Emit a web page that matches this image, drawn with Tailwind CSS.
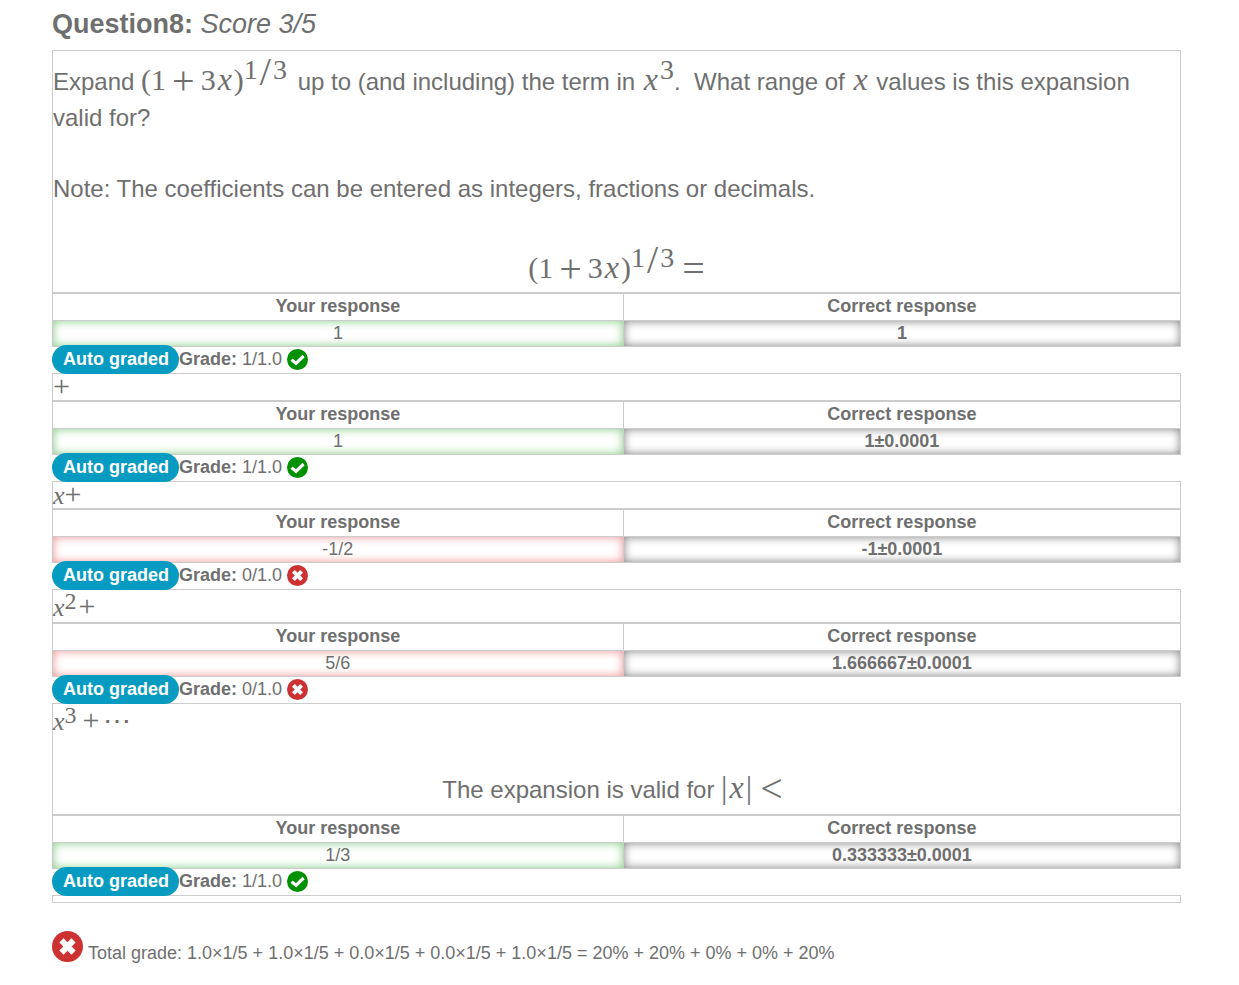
<!DOCTYPE html>
<html lang="en">
<head>
  <meta charset="UTF-8">
  <meta name="viewport" content="width=device-width, initial-scale=1.0">
  <title>Question 8</title>
  <script src="https://cdn.jsdelivr.net/npm/@tailwindcss/browser@4"></script>
</head>
<body class="bg-white font-['Liberation_Sans',Arial,sans-serif] text-lg text-[#6f6f6f]">
  <!-- Shared icons -->
  <svg class="hidden">
    <symbol id="icon-ok" viewBox="0 0 21 21">
      <circle cx="10.5" cy="10.5" r="10.5" fill="#009100"/>
      <path d="M4.6 10.6 L9 14.4 L16.6 7" fill="none" stroke="#fff" stroke-width="3.2"/>
    </symbol>
    <symbol id="icon-bad" viewBox="0 0 21 21">
      <circle cx="10.5" cy="10.5" r="10.5" fill="#cc3232"/>
      <path d="M6.4 6.4 L14.6 14.6 M14.6 6.4 L6.4 14.6" fill="none" stroke="#fff" stroke-width="4"/>
    </symbol>
  </svg>

  <main class="pl-[52px] pr-[58px] pt-2">
    <h1 class="text-[27px] leading-8 font-bold">Question8: <em class="font-normal">Score 3/5</em></h1>

    <!-- Question text -->
    <section class="mt-[10px] border border-[#ccc] pt-[13px] pb-1 text-2xl leading-9">
      <p>Expand <span class="mr-1 font-['Liberation_Serif',serif] text-[30px] leading-0 whitespace-nowrap">(1<span class="mx-[6px] align-[-4px] text-[40px] leading-0">+</span>3<i class="mx-0.5 text-[32px] leading-0">x</i>)<span class="align-[11px] text-[28px]">1<span class="mx-0.5 align-[-6px] text-[40px] leading-0">/</span>3</span></span> up to (and including) the term in <span class="font-['Liberation_Serif',serif] text-[28px] leading-0"><i class="mx-0.5 text-[32px] leading-0">x</i><span class="align-[11px]">3</span></span>. &nbsp;What range of <i class="mx-0.5 font-['Liberation_Serif',serif] text-[32px] leading-0">x</i> values is this expansion valid for?</p>
      <p class="mt-[35px]">Note: The coefficients can be entered as integers, fractions or decimals.</p>
      <p class="mt-[45px] text-center"><span class="font-['Liberation_Serif',serif] text-[30px] leading-0 whitespace-nowrap">(1<span class="mx-[6px] align-[-4px] text-[40px] leading-0">+</span>3<i class="mx-0.5 text-[32px] leading-0">x</i>)<span class="align-[11px] text-[28px]">1<span class="mx-0.5 align-[-6px] text-[40px] leading-0">/</span>3</span><span class="ml-2 align-[-4px] text-[40px] leading-0">=</span></span></p>
    </section>
    <table class="w-full table-fixed border-collapse text-center">
      <colgroup><col class="w-[50.6%]"><col></colgroup>
      <tr class="leading-6"><th class="border border-[#ccc] p-0 pb-0.5">Your response</th><th class="border border-[#ccc] p-0 pb-0.5">Correct response</th></tr>
      <tr class="leading-6"><td class="border border-[#ccc] p-0 pb-px shadow-[inset_0_0_10px_#80cc80]">1</td><td class="border border-[#ccc] p-0 pb-px font-bold shadow-[inset_0_0_10px_#808080]">1</td></tr>
    </table>
    <div class="mb-0.5 flex h-6 items-center">
      <span class="rounded-full bg-[#089bc1] pr-[10px] pl-[11px] leading-[29px] font-bold text-white">Auto graded</span>
      <b>Grade:</b><span class="ml-[5px]">1/1.0</span>
      <svg class="ml-[5px] size-[21px]" role="img" aria-label="Correct"><use href="#icon-ok"/></svg>
    </div>

    <!-- x term -->
    <section class="h-7 border border-[#ccc] font-['Liberation_Serif',serif] text-[30px] leading-6">+</section>
    <table class="w-full table-fixed border-collapse text-center">
      <colgroup><col class="w-[50.6%]"><col></colgroup>
      <tr class="leading-6"><th class="border border-[#ccc] p-0 pb-0.5">Your response</th><th class="border border-[#ccc] p-0 pb-0.5">Correct response</th></tr>
      <tr class="leading-6"><td class="border border-[#ccc] p-0 pb-px shadow-[inset_0_0_10px_#80cc80]">1</td><td class="border border-[#ccc] p-0 pb-px font-bold shadow-[inset_0_0_10px_#808080]">1±0.0001</td></tr>
    </table>
    <div class="mb-0.5 flex h-6 items-center">
      <span class="rounded-full bg-[#089bc1] pr-[10px] pl-[11px] leading-[29px] font-bold text-white">Auto graded</span>
      <b>Grade:</b><span class="ml-[5px]">1/1.0</span>
      <svg class="ml-[5px] size-[21px]" role="img" aria-label="Correct"><use href="#icon-ok"/></svg>
    </div>

    <!-- x squared term -->
    <section class="h-7 border border-[#ccc] font-['Liberation_Serif',serif] text-[30px] leading-6"><i class="text-[26px] leading-0">x</i>+</section>
    <table class="w-full table-fixed border-collapse text-center">
      <colgroup><col class="w-[50.6%]"><col></colgroup>
      <tr class="leading-6"><th class="border border-[#ccc] p-0 pb-0.5">Your response</th><th class="border border-[#ccc] p-0 pb-0.5">Correct response</th></tr>
      <tr class="leading-6"><td class="border border-[#ccc] p-0 pb-px shadow-[inset_0_0_10px_#f09090]">-1/2</td><td class="border border-[#ccc] p-0 pb-px font-bold shadow-[inset_0_0_10px_#808080]">-1±0.0001</td></tr>
    </table>
    <div class="mb-0.5 flex h-6 items-center">
      <span class="rounded-full bg-[#089bc1] pr-[10px] pl-[11px] leading-[29px] font-bold text-white">Auto graded</span>
      <b>Grade:</b><span class="ml-[5px]">0/1.0</span>
      <svg class="ml-[5px] size-[21px]" role="img" aria-label="Incorrect"><use href="#icon-bad"/></svg>
    </div>

    <!-- x cubed term -->
    <section class="h-[34px] border border-[#ccc] pt-1 font-['Liberation_Serif',serif] text-[30px] leading-6"><i class="text-[26px] leading-0">x</i><span class="align-[7px] text-2xl leading-0">2</span><span class="ml-0.5">+</span></section>
    <table class="w-full table-fixed border-collapse text-center">
      <colgroup><col class="w-[50.6%]"><col></colgroup>
      <tr class="leading-6"><th class="border border-[#ccc] p-0 pb-0.5">Your response</th><th class="border border-[#ccc] p-0 pb-0.5">Correct response</th></tr>
      <tr class="leading-6"><td class="border border-[#ccc] p-0 pb-px shadow-[inset_0_0_10px_#f09090]">5/6</td><td class="border border-[#ccc] p-0 pb-px font-bold shadow-[inset_0_0_10px_#808080]">1.666667±0.0001</td></tr>
    </table>
    <div class="mb-0.5 flex h-6 items-center">
      <span class="rounded-full bg-[#089bc1] pr-[10px] pl-[11px] leading-[29px] font-bold text-white">Auto graded</span>
      <b>Grade:</b><span class="ml-[5px]">0/1.0</span>
      <svg class="ml-[5px] size-[21px]" role="img" aria-label="Incorrect"><use href="#icon-bad"/></svg>
    </div>

    <!-- Range of validity -->
    <section class="border border-[#ccc] pt-1 pb-[6px]">
      <p class="font-['Liberation_Serif',serif] text-[30px] leading-6"><i class="text-[26px] leading-0">x</i><span class="align-[7px] text-2xl leading-0">3</span><span class="ml-[6px]">+</span><span class="ml-1 text-[28px] leading-0">⋯</span></p>
      <p class="mt-10 text-center text-2xl leading-9">The expansion is valid for <span class="mr-2 font-['Liberation_Serif',serif] text-[32px] leading-0 whitespace-nowrap">|<i class="mx-0.5">x</i>|<span class="ml-2 align-[-4px] text-[40px] leading-0">&lt;</span></span></p>
    </section>
    <table class="w-full table-fixed border-collapse text-center">
      <colgroup><col class="w-[50.6%]"><col></colgroup>
      <tr class="leading-6"><th class="border border-[#ccc] p-0 pb-0.5">Your response</th><th class="border border-[#ccc] p-0 pb-0.5">Correct response</th></tr>
      <tr class="leading-6"><td class="border border-[#ccc] p-0 pb-px shadow-[inset_0_0_10px_#80cc80]">1/3</td><td class="border border-[#ccc] p-0 pb-px font-bold shadow-[inset_0_0_10px_#808080]">0.333333±0.0001</td></tr>
    </table>
    <div class="mb-0.5 flex h-6 items-center">
      <span class="rounded-full bg-[#089bc1] pr-[10px] pl-[11px] leading-[29px] font-bold text-white">Auto graded</span>
      <b>Grade:</b><span class="ml-[5px]">1/1.0</span>
      <svg class="ml-[5px] size-[21px]" role="img" aria-label="Correct"><use href="#icon-ok"/></svg>
    </div>
    <div class="h-2 border border-[#ccc]"></div>

    <!-- Total -->
    <footer class="mt-7 flex items-start">
      <svg class="size-[31px]" role="img" aria-label="Incorrect"><use href="#icon-bad"/></svg>
      <p class="mt-2 ml-[5px]">Total grade: 1.0×1/5 + 1.0×1/5 + 0.0×1/5 + 0.0×1/5 + 1.0×1/5 = 20% + 20% + 0% + 0% + 20%</p>
    </footer>
  </main>
</body>
</html>
